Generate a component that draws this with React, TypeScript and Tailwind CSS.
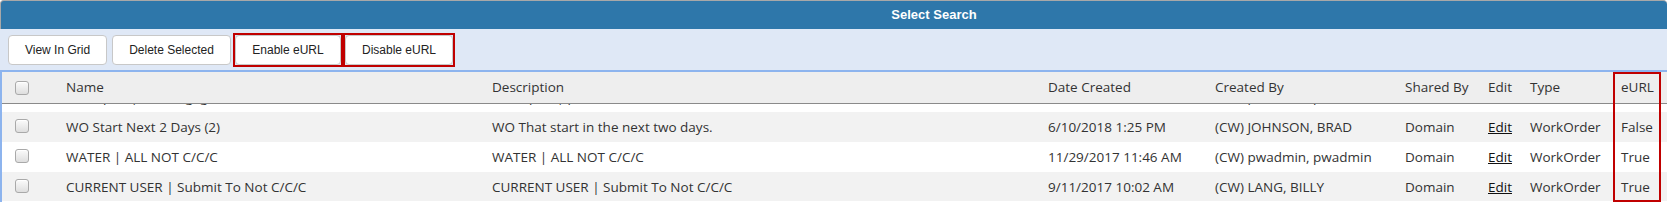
import React from 'react';

type Row = {
  name: string;
  description: string;
  created: string;
  createdBy: string;
  sharedBy: string;
  type: string;
  eurl: string;
};

const rows: Row[] = [
  {
    name: 'WO Open | Pending (g)',
    description: 'WO Open | past due',
    created: '6/12/2018 9:14 AM',
    createdBy: '(CW) pwadmin, pwadmin',
    sharedBy: 'Domain',
    type: 'WorkOrder',
    eurl: 'True',
  },
  {
    name: 'WO Start Next 2 Days (2)',
    description: 'WO That start in the next two days.',
    created: '6/10/2018 1:25 PM',
    createdBy: '(CW) JOHNSON, BRAD',
    sharedBy: 'Domain',
    type: 'WorkOrder',
    eurl: 'False',
  },
  {
    name: 'WATER | ALL NOT C/C/C',
    description: 'WATER | ALL NOT C/C/C',
    created: '11/29/2017 11:46 AM',
    createdBy: '(CW) pwadmin, pwadmin',
    sharedBy: 'Domain',
    type: 'WorkOrder',
    eurl: 'True',
  },
  {
    name: 'CURRENT USER | Submit To Not C/C/C',
    description: 'CURRENT USER | Submit To Not C/C/C',
    created: '9/11/2017 10:02 AM',
    createdBy: '(CW) LANG, BILLY',
    sharedBy: 'Domain',
    type: 'WorkOrder',
    eurl: 'True',
  },
];

const cols =
  'grid grid-cols-[64px_426px_556px_167px_190px_83px_42px_91px_1fr] items-center';

function Checkbox() {
  return (
    <div className="ml-[13px] h-[14px] w-[14px] rounded-[3px] border border-[#a9a9a9] bg-gradient-to-b from-[#fbfbfb] to-[#dedede] shadow-[inset_0_1px_0_#fff]" />
  );
}

function ToolButton({ label, width }: { label: string; width: string }) {
  return (
    <button
      className={`${width} h-[30px] rounded-[4px] border border-[#c8c8c8] bg-white text-[12px] text-[#222]`}
    >
      {label}
    </button>
  );
}

export default function App() {
  return (
    <div className="relative h-[208px] w-[1667px] overflow-hidden bg-white font-['Liberation_Sans',Arial,sans-serif]">
      {/* title */}
      <div className="flex h-[29px] items-center justify-center rounded-t-[4px] border-t border-l border-[#a8a8a8] bg-[#2e77aa] pl-[200px] text-[13px] font-bold text-white">
        Select Search
      </div>

      {/* toolbar */}
      <div className="flex h-[41px] items-start bg-[#dfe8f6] pl-[8px]">
        <div className="mt-[6px]">
          <ToolButton label="View In Grid" width="w-[99px]" />
        </div>
        <div className="ml-[5px] mt-[6px]">
          <ToolButton label="Delete Selected" width="w-[119px]" />
        </div>
        <div className="ml-[2px] mt-[4px] h-[34px] w-[110px] border-2 border-[#c00000]">
          <ToolButton label="Enable eURL" width="w-full" />
        </div>
        <div className="mt-[4px] h-[34px] w-[112px] border-2 border-[#c00000]">
          <ToolButton label="Disable eURL" width="w-full" />
        </div>
      </div>

      {/* grid */}
      <div className="h-[132px] border-t-2 border-l-2 border-[#8db4ee] font-['Open_Sans',sans-serif] text-[13.5px] text-[#333]">
        <div className={`${cols} h-[32px] border-b border-[#8a8a8a] bg-[#eeeeee]`}>
          <Checkbox />
          <div>Name</div>
          <div>Description</div>
          <div>Date Created</div>
          <div>Created By</div>
          <div>Shared By</div>
          <div>Edit</div>
          <div>Type</div>
          <div>eURL</div>
        </div>
        <div className="h-[97px] overflow-hidden">
          {rows.map((r, i) => (
            <div
              key={r.name}
              className={`${cols} h-[30px] whitespace-nowrap ${i === 0 ? 'mt-[-22px]' : ''} ${
                i % 2 === 1 ? 'bg-[#f2f2f2]' : 'bg-white'
              }`}
            >
              <div className="mb-[3px]">
                <Checkbox />
              </div>
              <div>{r.name}</div>
              <div>{r.description}</div>
              <div>{r.created}</div>
              <div>{r.createdBy}</div>
              <div>{r.sharedBy}</div>
              <div className="text-[#111] underline">Edit</div>
              <div>{r.type}</div>
              <div>{r.eurl}</div>
            </div>
          ))}
        </div>
      </div>

      {/* highlight around eURL column */}
      <div className="absolute left-[1613px] top-[72px] h-[130px] w-[48px] border-2 border-[#c00000]" />
    </div>
  );
}
